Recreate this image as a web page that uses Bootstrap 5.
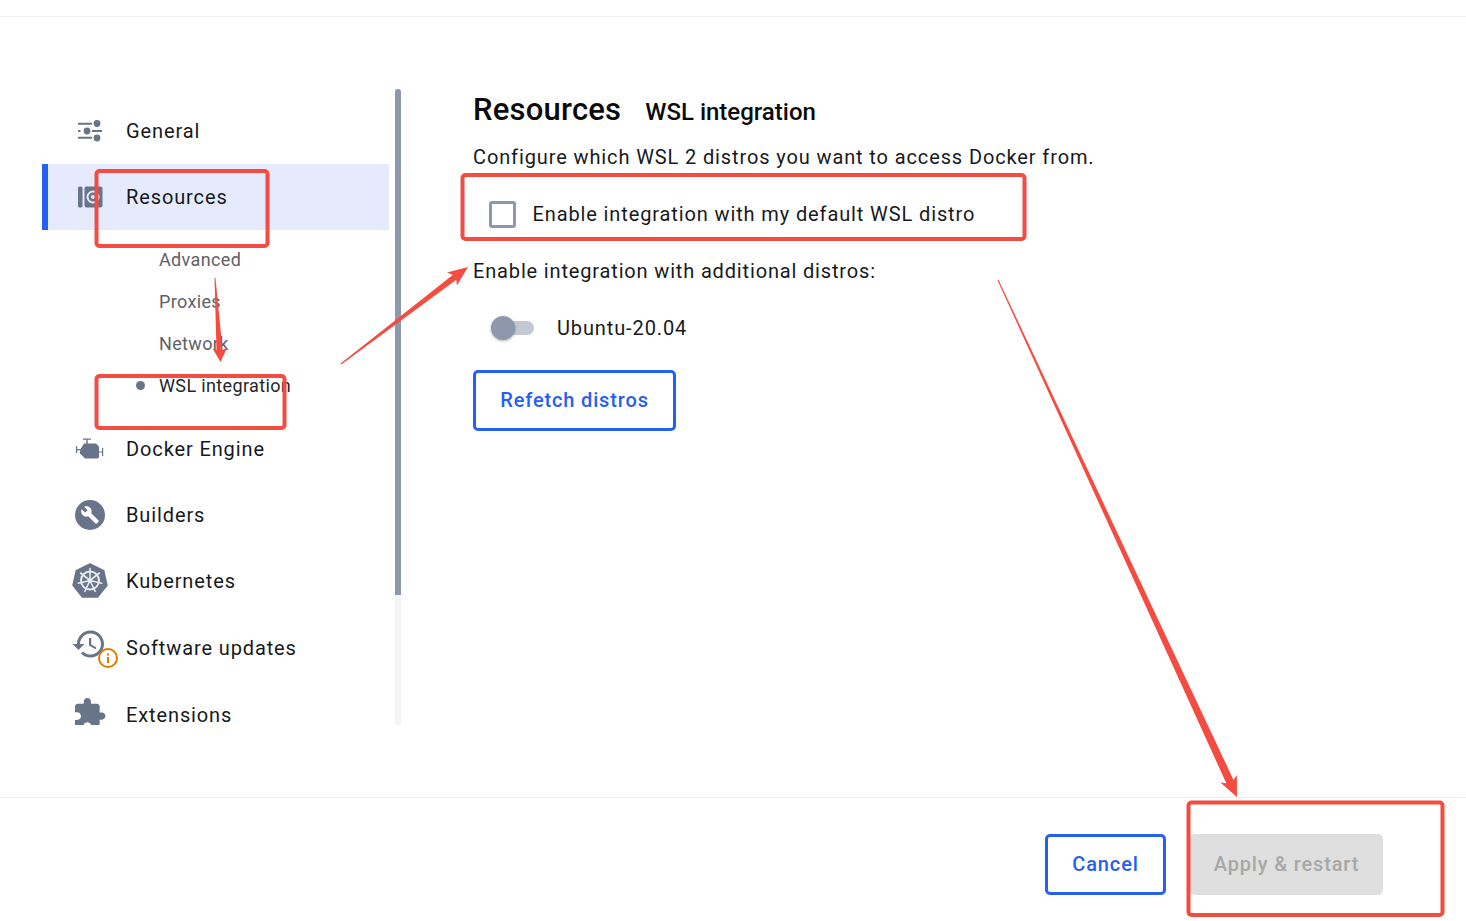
<!DOCTYPE html>
<html lang="en">
<head>
<meta charset="utf-8">
<title>Resources - WSL integration</title>
<link rel="stylesheet" href="https://cdn.jsdelivr.net/npm/bootstrap@5.3.0/dist/css/bootstrap.min.css">
<style>
html,body{height:921px;overflow:hidden}
body{font-family:Roboto,"Liberation Sans",sans-serif;font-size:20px;letter-spacing:.88px;color:#17191c;background:#fff;position:relative}
.topgap{height:17px;border-bottom:1px solid #efefef}
.workarea{height:780px}
.sidewrap{width:359px;margin-left:42px;margin-top:72px;height:636px;gap:6px}
.sidenav{width:347px;height:636px;overflow:hidden;padding-top:9px}
.sidenav .nav-link{height:66px;padding:0 0 0 24px;border-left:6px solid transparent;color:#17191c;gap:18px}
.sidenav .nav-link span{line-height:19px}
.sidenav .nav-link.chosen{background:#e5ebfc;border-left-color:#2560f0}
.sidenav .nav-link.tall{margin-top:1px}
.sidenav svg{width:36px;height:36px;flex:none;overflow:visible;fill:#677489}
.subnav{padding:8px 0 10px}
.sidenav .subnav .nav-link{height:42px;padding:0 0 0 117px;border:0;font-size:18px;letter-spacing:.36px;color:#5f6165;position:relative}
.sidenav .subnav .nav-link.chosen{background:none;color:#24262a}
.sidenav .subnav .nav-link.chosen::before{content:"";position:absolute;left:94px;top:17px;width:9px;height:9px;border-radius:50%;background:#677489}
.scrolltrack{width:6px;height:636px;background:#f4f4f6}
.scrollthumb{height:506px;background:#8d98ad;border-radius:3px 3px 0 0}
.mainpane{padding:75px 0 0 72px}
.headline{height:36px;gap:24px}
.headline h1{font-size:31px;font-weight:500;letter-spacing:.22px;margin:0;line-height:36px;color:#0b0b0d}
.headline h2{font-size:24px;font-weight:500;letter-spacing:0;margin:0;line-height:36px;position:relative;top:2px;color:#0b0b0d}
.textrow{height:28px;line-height:28px;margin:0}
.gaprow{margin-top:29px}
.gaprow0{margin-top:15px}
.tightrow{letter-spacing:.84px}
.form-check-input.wslcheck{width:27px;height:27px;margin:0 16.5px 0 16px;border:3px solid #8d98ad;border-radius:3px;float:none;flex:none}
.toggletrack{width:43px;height:14px;margin-left:18px;margin-right:23px;border-radius:7px;background:#c3c8d3;position:relative;flex:none}
.toggletrack::before{content:"";position:absolute;left:0;top:-5px;width:24px;height:24px;border-radius:50%;background:#8d98ad;box-shadow:0 1px 3px rgba(0,0,0,.3)}
.btn.actionbtn{height:61px;font-size:20px;font-weight:500;letter-spacing:.85px;border-width:3px;border-radius:5px;padding:0 0 2px;display:flex;align-items:center;justify-content:center;white-space:nowrap}
.btn.btn-outline-primary.actionbtn{color:#2560f0;border-color:#2560f0;background:#fff}
.refetch{margin-top:28px;width:203px}
.cancelbtn{width:121px}
.btn.applybtn{width:193px;background:#dfdfdf;border-color:#dfdfdf;color:#a8a8a8;opacity:1}
.footbar{height:124px;border-top:1px solid #efefef;padding:36px 83px 0 0;gap:24px}
.marks{position:absolute;left:0;top:0;width:1466px;height:921px;pointer-events:none}
</style>
</head>
<body>
<div class="topgap"></div>
<div class="workarea d-flex">
  <div class="sidewrap d-flex flex-shrink-0">
    <div class="sidenav">
      <nav class="nav flex-column flex-nowrap">
        <a class="nav-link d-flex align-items-center" href="#">
          <svg viewBox="0 0 36 36"><path d="M6 9.800h14v2H6zM6 23.800h14v2H6zM6 17h2.500v2H6zM20 17h10v2H20z"/><circle cx="25" cy="10.500" r="3.400"/><circle cx="15" cy="18" r="3.400"/><circle cx="25" cy="25" r="3.400"/></svg>
          <span>General</span></a>
        <a class="nav-link chosen d-flex align-items-center" href="#">
          <svg viewBox="0 0 36 36"><rect x="6" y="7.500" width="4.500" height="21" rx="1.500"/><rect x="12.500" y="7.500" width="18" height="21" rx="2"/><circle cx="21" cy="18" r="5.500" fill="none" stroke="#e5ebfc" stroke-width="2"/><circle cx="21" cy="18" r="2" fill="#e5ebfc"/></svg>
          <span>Resources</span></a>
        <div class="subnav nav flex-column flex-nowrap">
          <a class="nav-link d-flex align-items-center" href="#">Advanced</a>
          <a class="nav-link d-flex align-items-center" href="#">Proxies</a>
          <a class="nav-link d-flex align-items-center" href="#">Network</a>
          <a class="nav-link chosen d-flex align-items-center" href="#">WSL integration</a>
        </div>
        <a class="nav-link d-flex align-items-center" href="#">
          <svg viewBox="0 0 36 36"><path d="M11 7.500h8v1.300h-3.300V13h-1.400V8.800H11z"/><path d="M8 19l4-6.500h12l3 3V25.500q0 2-2 2H13l-5-5z"/><path d="M4 15h1.200v3h3v1.200h-3V22H4zM27 20.400h3V17h1.200v8H30v-3.400h-3z"/></svg>
          <span>Docker Engine</span></a>
        <a class="nav-link d-flex align-items-center" href="#">
          <svg viewBox="0 0 36 36"><circle cx="18" cy="18" r="15"/><path fill="#fff" transform="translate(8.400 8.400) scale(.8)" d="M22.700 19l-9.100-9.100c.9-2.300.4-5-1.500-6.900-2-2-5-2.400-7.400-1.300L9 6 6 9 1.600 4.700C.4 7.100.9 10.100 2.900 12.100c1.900 1.900 4.600 2.400 6.900 1.500l9.100 9.100c.4.4 1 .4 1.400 0l2.300-2.300c.5-.4.5-1.100.1-1.400z"/></svg>
          <span>Builders</span></a>
        <a class="nav-link d-flex align-items-center" href="#">
          <svg viewBox="0 0 36 36"><path stroke="#677489" stroke-width="1.500" stroke-linejoin="round" d="M18 1L31.700 7.600 35 22.400 25.600 34H10.400L1 22.400 4.300 7.600z"/><circle cx="18" cy="17.500" r="9" fill="none" stroke="#e8eaee" stroke-width="2"/><path fill="none" stroke="#e8eaee" stroke-width="1.600" stroke-linecap="round" d="M18 17.500V5.500M18 17.500L27.400 10M18 17.500L29.700 20.200M18 17.500L23.200 28.300M18 17.500L12.800 28.300M18 17.500L6.300 20.200M18 17.500L8.600 10"/><circle cx="18" cy="17.500" r="2.200" fill="#e8eaee"/></svg>
          <span>Kubernetes</span></a>
        <a class="nav-link tall d-flex align-items-center" href="#">
          <svg viewBox="0 0 36 36"><path transform="translate(-1 -4) scale(1.500)" d="M13 3c-4.970 0-9 4.030-9 9H1l3.890 3.890.07.14L9 12H6c0-3.870 3.130-7 7-7s7 3.130 7 7-3.130 7-7 7c-1.930 0-3.680-.79-4.940-2.060l-1.420 1.420C8.270 19.990 10.510 21 13 21c4.970 0 9-4.030 9-9s-4.030-9-9-9zm-1 5v5l4.280 2.540.72-1.210-3.500-2.080V8H12z"/><circle cx="36" cy="28" r="9" fill="#fff" stroke="#e07b00" stroke-width="2"/><rect x="35" y="27" width="2" height="6" fill="#e07b00"/><rect x="35" y="23.500" width="2" height="2" fill="#e07b00"/></svg>
          <span>Software updates</span></a>
        <a class="nav-link tall d-flex align-items-center" href="#">
          <svg viewBox="0 0 36 36"><path transform="translate(.1 -.45) scale(1.450)" d="M20.500 11H19V7c0-1.100-.9-2-2-2h-4V3.500C13 2.120 11.880 1 10.500 1S8 2.120 8 3.500V5H4c-1.100 0-1.990.9-1.990 2v3.800H3.500c1.490 0 2.700 1.210 2.700 2.700s-1.210 2.700-2.700 2.700H2V20c0 1.100.9 2 2 2h3.800v-1.500c0-1.490 1.210-2.700 2.700-2.700 1.490 0 2.700 1.210 2.700 2.700V22H17c1.100 0 2-.9 2-2v-4h1.500c1.380 0 2.500-1.120 2.500-2.500S21.880 11 20.500 11z"/></svg>
          <span>Extensions</span></a>
      </nav>
    </div>
    <div class="scrolltrack"><div class="scrollthumb"></div></div>
  </div>
  <main class="mainpane flex-grow-1">
    <div class="headline d-flex align-items-center"><h1>Resources</h1><h2>WSL integration</h2></div>
    <p class="textrow gaprow0">Configure which WSL 2 distros you want to access Docker from.</p>
    <div class="textrow gaprow d-flex align-items-center"><input class="form-check-input wslcheck" type="checkbox" id="wsldefault"><label for="wsldefault">Enable integration with my default WSL distro</label></div>
    <p class="textrow gaprow tightrow">Enable integration with additional distros:</p>
    <div class="textrow gaprow d-flex align-items-center"><span class="toggletrack"></span><span>Ubuntu-20.04</span></div>
    <button class="btn btn-outline-primary actionbtn refetch" type="button">Refetch distros</button>
  </main>
</div>
<footer class="footbar d-flex justify-content-end align-items-start">
  <button class="btn btn-outline-primary actionbtn cancelbtn" type="button">Cancel</button>
  <button class="btn actionbtn applybtn" type="button" disabled>Apply &amp; restart</button>
</footer>
<svg class="marks" viewBox="0 0 1466 921" aria-hidden="true">
  <g fill="none" stroke="#f44c40" stroke-width="4" stroke-linejoin="round">
    <rect x="96.500" y="171" width="171" height="75" rx="3"/>
    <rect x="96.500" y="376" width="188" height="52" rx="3"/>
    <rect x="462.500" y="175" width="562" height="64" rx="3"/>
    <rect x="1188.500" y="802.500" width="254" height="112.500" rx="3"/>
  </g>
  <g fill="#f44c40">
    <polygon points="214.500,278 215.500,278 222.500,350 227,348 220.500,362 212.600,348.500 216.500,350"/>
    <polygon points="340.600,363.500 341.400,364.500 456.300,279.700 456.900,285.400 468,267 447.100,272.600 452.700,274.900"/>
    <polygon points="997.500,280.200 998.500,279.800 1233.500,779.900 1236.800,775 1237,797 1220.400,782.600 1226.300,783.300"/>
  </g>
</svg>
<script src="https://cdn.jsdelivr.net/npm/bootstrap@5.3.0/dist/js/bootstrap.bundle.min.js"></script>
</body>
</html>
